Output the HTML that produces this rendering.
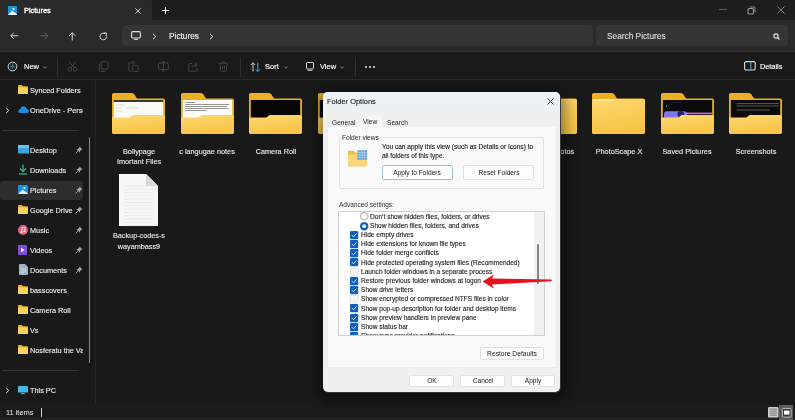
<!DOCTYPE html>
<html><head><meta charset="utf-8">
<style>
*{margin:0;padding:0;box-sizing:border-box}
html,body{width:795px;height:420px;overflow:hidden;background:#191919;font-family:"Liberation Sans",sans-serif;color:#fff;position:relative}
.a{position:absolute}
.t{position:absolute;white-space:nowrap;will-change:transform}
.k{-webkit-text-stroke:0.2px currentColor}
.k3{-webkit-text-stroke:0.3px currentColor}
.k2{-webkit-text-stroke:0.12px currentColor}
svg{position:absolute;overflow:visible}
</style></head><body>
<div class="a" style="left:0px;top:0px;width:795px;height:20px;background:#1d1d1d;"></div>
<div class="a" style="left:0px;top:0px;width:152px;height:20px;background:#2a2a2a;border-radius:0 2px 0 0"></div>
<div class="a" style="left:0px;top:20px;width:795px;height:32px;background:#2a2a2a;"></div>
<div class="a" style="left:0px;top:51px;width:795px;height:1px;background:#303030;"></div>
<div class="a" style="left:122px;top:25px;width:471px;height:21px;background:#353535;border-radius:4px"></div>
<div class="a" style="left:596px;top:25px;width:192px;height:21px;background:#353535;border-radius:4px"></div>
<div class="a" style="left:0px;top:52px;width:795px;height:27px;background:#1a1a1a;"></div>
<div class="a" style="left:0px;top:79px;width:795px;height:1.2px;background:#2b2b2b;"></div>
<div class="a" style="left:95px;top:80px;width:1px;height:324px;background:#262626;"></div>
<div class="a" style="left:0px;top:404px;width:795px;height:16px;background:#1b1b1b;"></div>
<div class="a" style="left:0px;top:417px;width:795px;height:3px;background:#1f2225;"></div>
<svg style="left:8px;top:6px" width="9" height="9" viewBox="0 0 9 9"><rect width="9" height="9" rx="0.5" fill="#1e90e0"/><path d="M0 9 L4.2 4.6 L9 8.2 V9Z" fill="#e6f4ff"/><circle cx="5.6" cy="3" r="1.1" fill="#e6f4ff"/></svg>
<div class="t k3" style="left:24px;top:5.70px;font-size:7.4px;color:#ffffff;line-height:10px;">Pictures</div>
<svg style="left:134.5px;top:7.5px" width="6" height="6" viewBox="0 0 6 6"><path d="M0.3 0.3 L5.7 5.7 M5.7 0.3 L0.3 5.7" stroke="#d8d8d8" stroke-width="0.9"/></svg>
<svg style="left:162px;top:7px" width="7" height="7" viewBox="0 0 7 7"><path d="M3.5 0 V7 M0 3.5 H7" stroke="#e8e8e8" stroke-width="1"/></svg>
<div class="a" style="left:718.5px;top:9px;width:8px;height:1px;background:#5a5a5a;"></div>
<svg style="left:746.5px;top:6px" width="9" height="9" viewBox="0 0 9 9"><rect x="1" y="2.5" width="5.5" height="5.5" rx="1" fill="none" stroke="#9a9a9a" stroke-width="1.1"/><path d="M2.8 1 H7 Q8 1 8 2 V6.2" fill="none" stroke="#9a9a9a" stroke-width="0.9"/></svg>
<svg style="left:777px;top:6px" width="8" height="8" viewBox="0 0 8 8"><path d="M0.5 0.5 L7.5 7.5 M7.5 0.5 L0.5 7.5" stroke="#8c8c8c" stroke-width="0.9"/></svg>
<svg style="left:9.7px;top:32px" width="8.5" height="7.5" viewBox="0 0 8.5 7.5"><path d="M8.3 3.75 H0.8 M3.8 0.6 L0.8 3.75 L3.8 6.9" fill="none" stroke="#dcdcdc" stroke-width="0.95"/></svg>
<svg style="left:39.7px;top:32px" width="8.5" height="7.5" viewBox="0 0 8.5 7.5"><path d="M0.2 3.75 H7.7 M4.7 0.6 L7.7 3.75 L4.7 6.9" fill="none" stroke="#666" stroke-width="0.95"/></svg>
<svg style="left:68.3px;top:31.5px" width="8.5" height="8.5" viewBox="0 0 8.5 8.5"><path d="M4.25 8.5 V0.8 M1 4 L4.25 0.8 L7.5 4" fill="none" stroke="#dcdcdc" stroke-width="0.95"/></svg>
<svg style="left:99px;top:31.5px" width="9" height="9" viewBox="0 0 9 9"><path d="M7.6 4.6 A3.3 3.3 0 1 1 6.3 1.9" fill="none" stroke="#dcdcdc" stroke-width="0.95"/><path d="M4.8 0.8 L7.5 1.1 L7.2 3.8" fill="none" stroke="#dcdcdc" stroke-width="0.95"/></svg>
<svg style="left:131px;top:31px" width="10" height="9" viewBox="0 0 10 9"><rect x="0.6" y="0.6" width="8.8" height="6.4" rx="1.2" fill="none" stroke="#dcdcdc" stroke-width="1.1"/><path d="M3 8.4 H7" stroke="#dcdcdc" stroke-width="1"/></svg>
<svg style="left:152px;top:33px" width="5" height="7" viewBox="0 0 5 7"><path d="M1 0.8 L3.8 3.5 L1 6.2" fill="none" stroke="#dcdcdc" stroke-width="1"/></svg>
<div class="t k2" style="left:168.5px;top:31.00px;font-size:8.3px;color:#f4f4f4;line-height:10px;">Pictures</div>
<svg style="left:209px;top:33px" width="5" height="7" viewBox="0 0 5 7"><path d="M1 0.8 L3.8 3.5 L1 6.2" fill="none" stroke="#dcdcdc" stroke-width="1"/></svg>
<div class="t k2" style="left:606.5px;top:31.00px;font-size:8.3px;color:#dcdcdc;line-height:10px;">Search Pictures</div>
<svg style="left:773px;top:32.5px" width="7" height="7" viewBox="0 0 7 7"><circle cx="3" cy="3" r="2.1" fill="none" stroke="#e6e6e6" stroke-width="1.1"/><path d="M4.5 4.5 L6.5 6.5" stroke="#e6e6e6" stroke-width="1.2"/></svg>
<svg style="left:7px;top:61px" width="11" height="11" viewBox="0 0 11 11"><circle cx="5.5" cy="5.5" r="4.4" fill="#1d2a30" stroke="#c8d6dc" stroke-width="1"/><path d="M5.5 3.2 V7.8 M3.2 5.5 H7.8" stroke="#4f7482" stroke-width="1"/></svg>
<div class="t k" style="left:23.5px;top:61.80px;font-size:7.5px;color:#f2f2f2;line-height:10px;">New</div>
<svg style="left:42.5px;top:65.5px" width="4" height="3" viewBox="0 0 4 3"><path d="M0.5 0.8 L2 2.2 L3.5 0.8" fill="none" stroke="#aaa" stroke-width="0.8"/></svg>
<div class="a" style="left:56.5px;top:57px;width:1px;height:20px;background:#2e2e2e;"></div>
<svg style="left:67px;top:61px" width="11" height="11" viewBox="0 0 11 11"><circle cx="2.8" cy="8.3" r="1.9" fill="none" stroke="#3e4749" stroke-width="1"/><circle cx="8.2" cy="8.3" r="1.9" fill="none" stroke="#3e4749" stroke-width="1"/><path d="M4 6.8 L8.8 0.5 M7 6.8 L2.2 0.5" stroke="#3e4749" stroke-width="1"/></svg>
<svg style="left:98px;top:61px" width="11" height="11" viewBox="0 0 11 11"><rect x="3.2" y="0.7" width="6.8" height="7.6" rx="1.5" fill="none" stroke="#3e4749" stroke-width="1"/><path d="M1.2 3 V8.6 Q1.2 10.3 2.9 10.3 H7.5" fill="none" stroke="#3e4749" stroke-width="1"/></svg>
<svg style="left:128px;top:61px" width="11" height="11" viewBox="0 0 11 11"><path d="M3 1.5 H1.8 Q0.8 1.5 0.8 2.5 V9.2 Q0.8 10.2 1.8 10.2 H4" fill="none" stroke="#414242" stroke-width="1"/><rect x="2.8" y="0.6" width="4" height="1.8" rx="0.6" fill="none" stroke="#414242" stroke-width="0.9"/><rect x="4.8" y="4.2" width="5.4" height="6.2" rx="1" fill="none" stroke="#34495a" stroke-width="1"/></svg>
<svg style="left:158px;top:61px" width="11" height="11" viewBox="0 0 11 11"><rect x="0.6" y="2" width="9.8" height="6.6" rx="1.3" fill="none" stroke="#3e4749" stroke-width="1"/><path d="M5.5 0.8 V10 M4.2 0.8 H6.8 M4.2 10 H6.8" stroke="#3e4749" stroke-width="0.9"/></svg>
<svg style="left:188px;top:61px" width="11" height="11" viewBox="0 0 11 11"><path d="M4 2.5 H2 Q0.8 2.5 0.8 3.7 V9 Q0.8 10.2 2 10.2 H8 Q9.2 10.2 9.2 9 V7.5" fill="none" stroke="#3e4749" stroke-width="1"/><path d="M4 7 Q4.5 3.8 8.5 3.8 M6.8 1.6 L9.2 3.8 L6.8 6" fill="none" stroke="#3e4749" stroke-width="1"/></svg>
<svg style="left:218px;top:61px" width="11" height="11" viewBox="0 0 11 11"><path d="M0.8 2.3 H10.2 M4 2.3 V1 H7 V2.3 M1.9 2.5 L2.6 9.3 Q2.8 10.3 3.8 10.3 H7.2 Q8.2 10.3 8.4 9.3 L9.1 2.5 M4.5 4.6 V8 M6.5 4.6 V8" fill="none" stroke="#414141" stroke-width="1"/></svg>
<div class="a" style="left:239.5px;top:57px;width:1px;height:20px;background:#2e2e2e;"></div>
<svg style="left:250px;top:61.5px" width="11" height="10" viewBox="0 0 11 10"><path d="M3 9.5 V0.8 M0.8 3 L3 0.8 L5.2 3" fill="none" stroke="#d0d0d0" stroke-width="1"/><path d="M7.8 0.8 V9.5 M5.6 7.3 L7.8 9.5 L10 7.3" fill="none" stroke="#4aa3df" stroke-width="1"/></svg>
<div class="t k" style="left:264.5px;top:61.80px;font-size:7.5px;color:#f2f2f2;line-height:10px;">Sort</div>
<svg style="left:283.5px;top:65.5px" width="4" height="3" viewBox="0 0 4 3"><path d="M0.5 0.8 L2 2.2 L3.5 0.8" fill="none" stroke="#aaa" stroke-width="0.8"/></svg>
<svg style="left:305.5px;top:62px" width="8" height="9" viewBox="0 0 8 9"><rect x="0.5" y="0.5" width="7" height="6.5" rx="1.1" fill="none" stroke="#d6d6d6" stroke-width="1"/><path d="M1.5 8.3 H6.5" stroke="#d6d6d6" stroke-width="0.9"/></svg>
<div class="t k" style="left:319.5px;top:61.80px;font-size:7.5px;color:#f2f2f2;line-height:10px;">View</div>
<svg style="left:339.5px;top:65.5px" width="4" height="3" viewBox="0 0 4 3"><path d="M0.5 0.8 L2 2.2 L3.5 0.8" fill="none" stroke="#aaa" stroke-width="0.8"/></svg>
<div class="a" style="left:354.5px;top:57px;width:1px;height:20px;background:#2e2e2e;"></div>
<div class="a" style="left:364.5px;top:65.5px;width:2.2px;height:2.2px;background:#e8e8e8;border-radius:1.1px"></div>
<div class="a" style="left:368.8px;top:65.5px;width:2.2px;height:2.2px;background:#e8e8e8;border-radius:1.1px"></div>
<div class="a" style="left:373.1px;top:65.5px;width:2.2px;height:2.2px;background:#e8e8e8;border-radius:1.1px"></div>
<svg style="left:744px;top:61px" width="12" height="10" viewBox="0 0 12 10"><rect x="0.6" y="0.6" width="10.6" height="8.4" rx="1.5" fill="none" stroke="#d0dde4" stroke-width="1.1"/><path d="M6.8 0.6 V9" stroke="#5aa9d6" stroke-width="1.1"/></svg>
<div class="t k" style="left:760px;top:61.80px;font-size:7.3px;color:#f2f2f2;line-height:10px;">Details</div>
<div class="a" style="left:0px;top:180.5px;width:83px;height:19.5px;background:#2d2d2d;border-radius:3px"></div>
<div class="a" style="left:88.5px;top:137px;width:1.3px;height:226px;background:#8b8b8b;border-radius:1px"></div>
<div class="a" style="left:2px;top:130px;width:77px;height:1px;background:#333;"></div>
<div class="a" style="left:2px;top:370px;width:77px;height:1px;background:#333;"></div>
<svg style="left:18px;top:85px" width="10" height="9" viewBox="0 0 10 9"><path d="M0 1 Q0 0 1 0 H3.8 L5 1.3 H9 Q10 1.3 10 2.3 V8 Q10 9 9 9 H1 Q0 9 0 8Z" fill="#e8b030"/><rect x="0" y="2.4" width="10" height="6.6" rx="0.8" fill="#fcd15c"/></svg>
<div class="a" style="left:30px;top:85.8px;width:53px;height:11px;overflow:hidden"><div class="t k2" style="left:0;top:0;font-size:7.3px;line-height:10px;color:#ececec">Synced Folders</div></div>
<svg style="left:18px;top:105px" width="11" height="9" viewBox="0 0 11 9"><path d="M2.5 8 Q0 8 0.3 5.8 Q0.6 4.2 2.3 4.2 Q2.8 1.2 5.8 1.2 Q8.2 1.4 8.6 3.8 Q10.8 4 10.8 6 Q10.6 8 8.8 8Z" fill="#1f8ee6"/></svg>
<div class="a" style="left:30px;top:105.8px;width:53px;height:11px;overflow:hidden"><div class="t k2" style="left:0;top:0;font-size:7.3px;line-height:10px;color:#ececec">OneDrive - Personal</div></div>
<svg style="left:5px;top:106.5px" width="5" height="7" viewBox="0 0 5 7"><path d="M1 0.8 L3.8 3.5 L1 6.2" fill="none" stroke="#d8d8d8" stroke-width="1"/></svg>
<svg style="left:18px;top:145px" width="11" height="9" viewBox="0 0 11 9"><rect x="0" y="0" width="11" height="8.5" rx="0.8" fill="#3aa6e0"/><rect x="0" y="0" width="11" height="3" fill="#66c3ef"/></svg>
<div class="a" style="left:30px;top:145.8px;width:53px;height:11px;overflow:hidden"><div class="t k2" style="left:0;top:0;font-size:7.3px;line-height:10px;color:#ececec">Desktop</div></div>
<svg style="left:74.5px;top:146px" width="8" height="8" viewBox="0 0 8 8"><path d="M0.6 7.4 L3 5" stroke="#a8a8a8" stroke-width="0.9"/><path d="M4.6 0.6 L7.4 3.4 L6.2 3.8 L4.8 5.6 L5 6.8 L1.2 3 L2.4 3.2 L4.2 1.8Z" fill="#a8a8a8"/></svg>
<svg style="left:18px;top:164px" width="10" height="11" viewBox="0 0 10 11"><path d="M5 0.5 V7.3 M2 4.5 L5 7.5 L8 4.5" fill="none" stroke="#2ebf9e" stroke-width="1.2"/><path d="M0.8 10 H9.2" stroke="#2ebf9e" stroke-width="1.2"/></svg>
<div class="a" style="left:30px;top:165.8px;width:53px;height:11px;overflow:hidden"><div class="t k2" style="left:0;top:0;font-size:7.3px;line-height:10px;color:#ececec">Downloads</div></div>
<svg style="left:74.5px;top:166px" width="8" height="8" viewBox="0 0 8 8"><path d="M0.6 7.4 L3 5" stroke="#a8a8a8" stroke-width="0.9"/><path d="M4.6 0.6 L7.4 3.4 L6.2 3.8 L4.8 5.6 L5 6.8 L1.2 3 L2.4 3.2 L4.2 1.8Z" fill="#a8a8a8"/></svg>
<svg style="left:18px;top:185px" width="10" height="9" viewBox="0 0 10 9"><rect width="10" height="9" rx="0.6" fill="#1e90e0"/><path d="M0 9 L4.5 4.8 L10 8.6 V9Z" fill="#e6f4ff"/><circle cx="6.4" cy="3" r="1.1" fill="#e6f4ff"/></svg>
<div class="a" style="left:30px;top:185.8px;width:53px;height:11px;overflow:hidden"><div class="t k2" style="left:0;top:0;font-size:7.3px;line-height:10px;color:#ececec">Pictures</div></div>
<svg style="left:74.5px;top:186px" width="8" height="8" viewBox="0 0 8 8"><path d="M0.6 7.4 L3 5" stroke="#a8a8a8" stroke-width="0.9"/><path d="M4.6 0.6 L7.4 3.4 L6.2 3.8 L4.8 5.6 L5 6.8 L1.2 3 L2.4 3.2 L4.2 1.8Z" fill="#a8a8a8"/></svg>
<svg style="left:18px;top:205px" width="10" height="9" viewBox="0 0 10 9"><path d="M0 1 Q0 0 1 0 H3.8 L5 1.3 H9 Q10 1.3 10 2.3 V8 Q10 9 9 9 H1 Q0 9 0 8Z" fill="#e8b030"/><rect x="0" y="2.4" width="10" height="6.6" rx="0.8" fill="#fcd15c"/></svg>
<div class="a" style="left:30px;top:205.8px;width:53px;height:11px;overflow:hidden"><div class="t k2" style="left:0;top:0;font-size:7.3px;line-height:10px;color:#ececec">Google Drive</div></div>
<svg style="left:74.5px;top:206px" width="8" height="8" viewBox="0 0 8 8"><path d="M0.6 7.4 L3 5" stroke="#a8a8a8" stroke-width="0.9"/><path d="M4.6 0.6 L7.4 3.4 L6.2 3.8 L4.8 5.6 L5 6.8 L1.2 3 L2.4 3.2 L4.2 1.8Z" fill="#a8a8a8"/></svg>
<svg style="left:18px;top:224.5px" width="10" height="10" viewBox="0 0 10 10"><circle cx="5" cy="5" r="5" fill="#e0607a"/><path d="M4 7.2 V2.6 L7 2 V6.4" fill="none" stroke="#fde" stroke-width="0.9"/><circle cx="3.3" cy="7.2" r="1" fill="#fde"/><circle cx="6.3" cy="6.5" r="1" fill="#fde"/></svg>
<div class="a" style="left:30px;top:225.8px;width:53px;height:11px;overflow:hidden"><div class="t k2" style="left:0;top:0;font-size:7.3px;line-height:10px;color:#ececec">Music</div></div>
<svg style="left:74.5px;top:226px" width="8" height="8" viewBox="0 0 8 8"><path d="M0.6 7.4 L3 5" stroke="#a8a8a8" stroke-width="0.9"/><path d="M4.6 0.6 L7.4 3.4 L6.2 3.8 L4.8 5.6 L5 6.8 L1.2 3 L2.4 3.2 L4.2 1.8Z" fill="#a8a8a8"/></svg>
<svg style="left:18px;top:244.5px" width="9" height="10" viewBox="0 0 9 10"><rect width="9" height="10" rx="1" fill="#7b4fd8"/><path d="M3 2.8 L6.8 5 L3 7.2Z" fill="#f3ecff"/></svg>
<div class="a" style="left:30px;top:245.8px;width:53px;height:11px;overflow:hidden"><div class="t k2" style="left:0;top:0;font-size:7.3px;line-height:10px;color:#ececec">Videos</div></div>
<svg style="left:74.5px;top:246px" width="8" height="8" viewBox="0 0 8 8"><path d="M0.6 7.4 L3 5" stroke="#a8a8a8" stroke-width="0.9"/><path d="M4.6 0.6 L7.4 3.4 L6.2 3.8 L4.8 5.6 L5 6.8 L1.2 3 L2.4 3.2 L4.2 1.8Z" fill="#a8a8a8"/></svg>
<svg style="left:18.5px;top:264px" width="9" height="11" viewBox="0 0 9 11"><path d="M0 1 Q0 0 1 0 H6 L9 3 V10 Q9 11 8 11 H1 Q0 11 0 10Z" fill="#9fb4c8"/><path d="M2 5 H7 M2 7 H7 M2 9 H5" stroke="#dfe8f0" stroke-width="0.7"/></svg>
<div class="a" style="left:30px;top:265.8px;width:53px;height:11px;overflow:hidden"><div class="t k2" style="left:0;top:0;font-size:7.3px;line-height:10px;color:#ececec">Documents</div></div>
<svg style="left:74.5px;top:266px" width="8" height="8" viewBox="0 0 8 8"><path d="M0.6 7.4 L3 5" stroke="#a8a8a8" stroke-width="0.9"/><path d="M4.6 0.6 L7.4 3.4 L6.2 3.8 L4.8 5.6 L5 6.8 L1.2 3 L2.4 3.2 L4.2 1.8Z" fill="#a8a8a8"/></svg>
<svg style="left:18px;top:285px" width="10" height="9" viewBox="0 0 10 9"><path d="M0 1 Q0 0 1 0 H3.8 L5 1.3 H9 Q10 1.3 10 2.3 V8 Q10 9 9 9 H1 Q0 9 0 8Z" fill="#e8b030"/><rect x="0" y="2.4" width="10" height="6.6" rx="0.8" fill="#fcd15c"/></svg>
<div class="a" style="left:30px;top:285.8px;width:53px;height:11px;overflow:hidden"><div class="t k2" style="left:0;top:0;font-size:7.3px;line-height:10px;color:#ececec">basscovers</div></div>
<svg style="left:18px;top:305px" width="10" height="9" viewBox="0 0 10 9"><path d="M0 1 Q0 0 1 0 H3.8 L5 1.3 H9 Q10 1.3 10 2.3 V8 Q10 9 9 9 H1 Q0 9 0 8Z" fill="#e8b030"/><rect x="0" y="2.4" width="10" height="6.6" rx="0.8" fill="#fcd15c"/></svg>
<div class="a" style="left:30px;top:305.8px;width:53px;height:11px;overflow:hidden"><div class="t k2" style="left:0;top:0;font-size:7.3px;line-height:10px;color:#ececec">Camera Roll</div></div>
<svg style="left:18px;top:325px" width="10" height="9" viewBox="0 0 10 9"><path d="M0 1 Q0 0 1 0 H3.8 L5 1.3 H9 Q10 1.3 10 2.3 V8 Q10 9 9 9 H1 Q0 9 0 8Z" fill="#e8b030"/><rect x="0" y="2.4" width="10" height="6.6" rx="0.8" fill="#fcd15c"/></svg>
<div class="a" style="left:30px;top:325.8px;width:53px;height:11px;overflow:hidden"><div class="t k2" style="left:0;top:0;font-size:7.3px;line-height:10px;color:#ececec">Vs</div></div>
<svg style="left:18px;top:345px" width="10" height="9" viewBox="0 0 10 9"><path d="M0 1 Q0 0 1 0 H3.8 L5 1.3 H9 Q10 1.3 10 2.3 V8 Q10 9 9 9 H1 Q0 9 0 8Z" fill="#e8b030"/><rect x="0" y="2.4" width="10" height="6.6" rx="0.8" fill="#fcd15c"/></svg>
<div class="a" style="left:30px;top:345.8px;width:53px;height:11px;overflow:hidden"><div class="t k2" style="left:0;top:0;font-size:7.3px;line-height:10px;color:#ececec">Nosferatu the Vampire</div></div>
<svg style="left:18px;top:385.5px" width="10" height="8.5" viewBox="0 0 10 8.5"><rect x="0" y="0" width="10" height="6.5" rx="0.6" fill="#45b8ea"/><rect x="3.2" y="7" width="3.6" height="1.2" fill="#6aa8d0"/></svg>
<div class="a" style="left:30px;top:385.8px;width:53px;height:11px;overflow:hidden"><div class="t k2" style="left:0;top:0;font-size:7.3px;line-height:10px;color:#ececec">This PC</div></div>
<svg style="left:5px;top:386.5px" width="5" height="7" viewBox="0 0 5 7"><path d="M1 0.8 L3.8 3.5 L1 6.2" fill="none" stroke="#d8d8d8" stroke-width="1"/></svg>
<div class="t k2" style="left:6px;top:407.80px;font-size:7.4px;color:#d8d8d8;line-height:10px;">11 items</div>
<div class="a" style="left:40.5px;top:408px;width:1px;height:9px;background:#cfcfcf;"></div>
<svg style="left:767.5px;top:406.5px" width="10.5" height="10.5" viewBox="0 0 10.5 10.5"><rect x="0" y="0" width="10.5" height="10.5" rx="1.2" fill="#cfcfcf"/><path d="M1.5 2.2 H9 M1.5 4.2 H9 M1.5 6.2 H9 M1.5 8.2 H9" stroke="#3a3a3a" stroke-width="0.6"/></svg>
<div class="a" style="left:779.4px;top:404.5px;width:13.8px;height:15.5px;background:#5a5a5a;"></div>
<svg style="left:782px;top:407.5px" width="9.5" height="9.5" viewBox="0 0 9.5 9.5"><rect x="0.4" y="0.4" width="8.7" height="8.7" rx="1" fill="#3a3a3a" stroke="#d8d8d8" stroke-width="0.8"/><rect x="2" y="2.6" width="5.5" height="4" fill="#fafafa"/></svg>
<svg style="left:112.0px;top:93px" width="53" height="41" viewBox="0 0 53 41"><defs><linearGradient id="g112" x1="0" y1="0" x2="0.3" y2="1"><stop offset="0" stop-color="#fdd872"/><stop offset="1" stop-color="#f7c445"/></linearGradient></defs><path d="M2 0 H19.5 C21 0 21.8 0.8 22.6 1.8 L25 5.5 H51 C52.2 5.5 53 6.3 53 7.5 V39 C53 40.2 52.2 41 51 41 H2 C0.8 41 0 40.2 0 39 V2 C0 0.8 0.8 0 2 0Z" fill="#eeae24"/><rect x="1.8" y="7" width="49.4" height="18" fill="#fbfbf6"/><rect x="1.8" y="7" width="49.4" height="2" fill="#3a3a2a"/><path d="M4 12 H12 M4 15 H9 M14 15 H26 M4 18 H10" stroke="#c9c3a6" stroke-width="0.6"/><path d="M0 24.5 H17 C18.2 24.5 18.6 23.6 19.4 22.8 C20.2 22.1 20.8 22 22 22 H51 C52.2 22 53 22.8 53 24 V39 C53 40.2 52.2 41 51 41 H2 C0.8 41 0 40.2 0 39Z" fill="url(#g112)"/></svg>
<div class="t k2" style="left:104.5px;top:146.60px;font-size:7.3px;color:#e8e8e8;line-height:10px;width:68px;text-align:center;">Bollypage</div>
<div class="t k2" style="left:104.5px;top:156.90px;font-size:7.3px;color:#e8e8e8;line-height:10px;width:68px;text-align:center;">Imortant Files</div>
<svg style="left:180.6px;top:93px" width="53" height="41" viewBox="0 0 53 41"><defs><linearGradient id="g180" x1="0" y1="0" x2="0.3" y2="1"><stop offset="0" stop-color="#fdd872"/><stop offset="1" stop-color="#f7c445"/></linearGradient></defs><path d="M2 0 H19.5 C21 0 21.8 0.8 22.6 1.8 L25 5.5 H51 C52.2 5.5 53 6.3 53 7.5 V39 C53 40.2 52.2 41 51 41 H2 C0.8 41 0 40.2 0 39 V2 C0 0.8 0.8 0 2 0Z" fill="#eeae24"/><rect x="1.8" y="7" width="49.4" height="18" fill="#fbfbf8"/><path d="M4 9.5 H14 M4 11.5 H48 M4 13.5 H46 M4 15.5 H47 M4 17.5 H26" stroke="#6b6b6b" stroke-width="0.7"/><path d="M0 24.5 H17 C18.2 24.5 18.6 23.6 19.4 22.8 C20.2 22.1 20.8 22 22 22 H51 C52.2 22 53 22.8 53 24 V39 C53 40.2 52.2 41 51 41 H2 C0.8 41 0 40.2 0 39Z" fill="url(#g180)"/></svg>
<div class="t k2" style="left:173.1px;top:146.60px;font-size:7.3px;color:#e8e8e8;line-height:10px;width:68px;text-align:center;">c langugae notes</div>
<svg style="left:249.2px;top:93px" width="53" height="41" viewBox="0 0 53 41"><defs><linearGradient id="g249" x1="0" y1="0" x2="0.3" y2="1"><stop offset="0" stop-color="#fdd872"/><stop offset="1" stop-color="#f7c445"/></linearGradient></defs><path d="M2 0 H19.5 C21 0 21.8 0.8 22.6 1.8 L25 5.5 H51 C52.2 5.5 53 6.3 53 7.5 V39 C53 40.2 52.2 41 51 41 H2 C0.8 41 0 40.2 0 39 V2 C0 0.8 0.8 0 2 0Z" fill="#eeae24"/><rect x="1.8" y="7" width="49.4" height="18" fill="#050505"/><path d="M0 24.5 H17 C18.2 24.5 18.6 23.6 19.4 22.8 C20.2 22.1 20.8 22 22 22 H51 C52.2 22 53 22.8 53 24 V39 C53 40.2 52.2 41 51 41 H2 C0.8 41 0 40.2 0 39Z" fill="url(#g249)"/></svg>
<div class="t k2" style="left:241.7px;top:146.60px;font-size:7.3px;color:#e8e8e8;line-height:10px;width:68px;text-align:center;">Camera Roll</div>
<svg style="left:317.8px;top:93px" width="53" height="41" viewBox="0 0 53 41"><defs><linearGradient id="g317" x1="0" y1="0" x2="0.3" y2="1"><stop offset="0" stop-color="#fdd872"/><stop offset="1" stop-color="#f7c445"/></linearGradient></defs><path d="M2 0 H19.5 C21 0 21.8 0.8 22.6 1.8 L25 5.5 H51 C52.2 5.5 53 6.3 53 7.5 V39 C53 40.2 52.2 41 51 41 H2 C0.8 41 0 40.2 0 39 V2 C0 0.8 0.8 0 2 0Z" fill="#eeae24"/><rect x="1.8" y="7" width="49.4" height="18" fill="#050505"/><path d="M0 24.5 H17 C18.2 24.5 18.6 23.6 19.4 22.8 C20.2 22.1 20.8 22 22 22 H51 C52.2 22 53 22.8 53 24 V39 C53 40.2 52.2 41 51 41 H2 C0.8 41 0 40.2 0 39Z" fill="url(#g317)"/></svg>
<svg style="left:386.4px;top:93px" width="53" height="41" viewBox="0 0 53 41"><defs><linearGradient id="g386" x1="0" y1="0" x2="0.3" y2="1"><stop offset="0" stop-color="#fdd872"/><stop offset="1" stop-color="#f7c445"/></linearGradient></defs><path d="M2 0 H19.5 C21 0 21.8 0.8 22.6 1.8 L25 5.5 H51 C52.2 5.5 53 6.3 53 7.5 V39 C53 40.2 52.2 41 51 41 H2 C0.8 41 0 40.2 0 39 V2 C0 0.8 0.8 0 2 0Z" fill="#eeae24"/><rect x="0" y="6" width="53" height="35" rx="2" fill="url(#g386)"/><rect x="1.5" y="6.4" width="20" height="1.3" fill="#fff2c8" opacity="0.8"/></svg>
<svg style="left:455.0px;top:93px" width="53" height="41" viewBox="0 0 53 41"><defs><linearGradient id="g455" x1="0" y1="0" x2="0.3" y2="1"><stop offset="0" stop-color="#fdd872"/><stop offset="1" stop-color="#f7c445"/></linearGradient></defs><path d="M2 0 H19.5 C21 0 21.8 0.8 22.6 1.8 L25 5.5 H51 C52.2 5.5 53 6.3 53 7.5 V39 C53 40.2 52.2 41 51 41 H2 C0.8 41 0 40.2 0 39 V2 C0 0.8 0.8 0 2 0Z" fill="#eeae24"/><rect x="0" y="6" width="53" height="35" rx="2" fill="url(#g455)"/><rect x="1.5" y="6.4" width="20" height="1.3" fill="#fff2c8" opacity="0.8"/></svg>
<svg style="left:523.6px;top:93px" width="53" height="41" viewBox="0 0 53 41"><defs><linearGradient id="g523" x1="0" y1="0" x2="0.3" y2="1"><stop offset="0" stop-color="#fdd872"/><stop offset="1" stop-color="#f7c445"/></linearGradient></defs><path d="M2 0 H19.5 C21 0 21.8 0.8 22.6 1.8 L25 5.5 H51 C52.2 5.5 53 6.3 53 7.5 V39 C53 40.2 52.2 41 51 41 H2 C0.8 41 0 40.2 0 39 V2 C0 0.8 0.8 0 2 0Z" fill="#eeae24"/><rect x="0" y="6" width="53" height="35" rx="2" fill="url(#g523)"/></svg>
<div class="t k2" style="left:516.0999999999999px;top:146.60px;font-size:7.3px;color:#e8e8e8;line-height:10px;width:68px;text-align:center;">Google Photos</div>
<svg style="left:592.2px;top:93px" width="53" height="41" viewBox="0 0 53 41"><defs><linearGradient id="g592" x1="0" y1="0" x2="0.3" y2="1"><stop offset="0" stop-color="#fdd872"/><stop offset="1" stop-color="#f7c445"/></linearGradient></defs><path d="M2 0 H19.5 C21 0 21.8 0.8 22.6 1.8 L25 5.5 H51 C52.2 5.5 53 6.3 53 7.5 V39 C53 40.2 52.2 41 51 41 H2 C0.8 41 0 40.2 0 39 V2 C0 0.8 0.8 0 2 0Z" fill="#eeae24"/><rect x="0" y="6" width="53" height="35" rx="2" fill="url(#g592)"/><rect x="1.5" y="6.4" width="20" height="1.3" fill="#fff2c8" opacity="0.8"/></svg>
<div class="t k2" style="left:584.6999999999999px;top:146.60px;font-size:7.3px;color:#e8e8e8;line-height:10px;width:68px;text-align:center;">PhotoScape X</div>
<svg style="left:660.8px;top:93px" width="53" height="41" viewBox="0 0 53 41"><defs><linearGradient id="g660" x1="0" y1="0" x2="0.3" y2="1"><stop offset="0" stop-color="#fdd872"/><stop offset="1" stop-color="#f7c445"/></linearGradient></defs><path d="M2 0 H19.5 C21 0 21.8 0.8 22.6 1.8 L25 5.5 H51 C52.2 5.5 53 6.3 53 7.5 V39 C53 40.2 52.2 41 51 41 H2 C0.8 41 0 40.2 0 39 V2 C0 0.8 0.8 0 2 0Z" fill="#eeae24"/><rect x="1.8" y="7" width="49.4" height="18" fill="#0b0b0f"/><path d="M3 25 V20.5 Q3 18.3 5.5 18.3 H23 Q26 18.3 26 21 V25Z" fill="#7f78ee"/><rect x="24" y="19.6" width="27" height="1.6" fill="#d868d8"/><circle cx="19.8" cy="21.3" r="3.3" fill="#22226a"/><path d="M5.5 12 V14" stroke="#4aa0a0" stroke-width="0.8"/><path d="M10 9.5 H20" stroke="#333a44" stroke-width="0.5"/><path d="M0 24.5 H17 C18.2 24.5 18.6 23.6 19.4 22.8 C20.2 22.1 20.8 22 22 22 H51 C52.2 22 53 22.8 53 24 V39 C53 40.2 52.2 41 51 41 H2 C0.8 41 0 40.2 0 39Z" fill="url(#g660)"/></svg>
<div class="t k2" style="left:653.3px;top:146.60px;font-size:7.3px;color:#e8e8e8;line-height:10px;width:68px;text-align:center;">Saved Pictures</div>
<svg style="left:729.4px;top:93px" width="53" height="41" viewBox="0 0 53 41"><defs><linearGradient id="g729" x1="0" y1="0" x2="0.3" y2="1"><stop offset="0" stop-color="#fdd872"/><stop offset="1" stop-color="#f7c445"/></linearGradient></defs><path d="M2 0 H19.5 C21 0 21.8 0.8 22.6 1.8 L25 5.5 H51 C52.2 5.5 53 6.3 53 7.5 V39 C53 40.2 52.2 41 51 41 H2 C0.8 41 0 40.2 0 39 V2 C0 0.8 0.8 0 2 0Z" fill="#eeae24"/><rect x="1.8" y="7" width="49.4" height="18" fill="#0b0b0b"/><path d="M7.5 10.6 H50 M7.5 13 H50 M7.5 17 H41" stroke="#9a9a9a" stroke-width="0.55"/><path d="M0 24.5 H17 C18.2 24.5 18.6 23.6 19.4 22.8 C20.2 22.1 20.8 22 22 22 H51 C52.2 22 53 22.8 53 24 V39 C53 40.2 52.2 41 51 41 H2 C0.8 41 0 40.2 0 39Z" fill="url(#g729)"/></svg>
<div class="t k2" style="left:721.9px;top:146.60px;font-size:7.3px;color:#e8e8e8;line-height:10px;width:68px;text-align:center;">Screenshots</div>
<svg style="left:119px;top:174px" width="39" height="52" viewBox="0 0 39 52"><path d="M0 0 H27 L39 12 V52 H0Z" fill="#f7f7f7"/><path d="M27 0 V12 H39Z" fill="#d9d9d9"/><path d="M27 0 L39 12" stroke="#c8c8c8" stroke-width="0.5"/><path d="M5 12.0 H34" stroke="#e0e0e0" stroke-width="0.6"/><path d="M5 15.3 H34" stroke="#e0e0e0" stroke-width="0.6"/><path d="M5 18.6 H34" stroke="#e0e0e0" stroke-width="0.6"/><path d="M5 21.9 H34" stroke="#e0e0e0" stroke-width="0.6"/><path d="M5 25.2 H34" stroke="#e0e0e0" stroke-width="0.6"/><path d="M5 28.5 H34" stroke="#e0e0e0" stroke-width="0.6"/><path d="M5 31.8 H34" stroke="#e0e0e0" stroke-width="0.6"/><path d="M5 35.1 H34" stroke="#e0e0e0" stroke-width="0.6"/><path d="M5 38.4 H34" stroke="#e0e0e0" stroke-width="0.6"/><path d="M5 41.7 H34" stroke="#e0e0e0" stroke-width="0.6"/><path d="M5 45.0 H34" stroke="#e0e0e0" stroke-width="0.6"/><path d="M5 48.3 H34" stroke="#e0e0e0" stroke-width="0.6"/><path d="M5 51.6 H34" stroke="#e0e0e0" stroke-width="0.6"/></svg>
<div class="t k2" style="left:103.5px;top:231.30px;font-size:7.25px;color:#e8e8e8;line-height:10px;width:70px;text-align:center;">Backup-codes-s</div>
<div class="t k2" style="left:103.5px;top:241.70px;font-size:7.25px;color:#e8e8e8;line-height:10px;width:70px;text-align:center;">wayambass9</div>
<div class="a" style="left:322.5px;top:91.5px;width:238px;height:301.5px;background:#3a3a3a;border-radius:6px;box-shadow:0 3px 14px 4px rgba(0,0,0,0.45)"></div>
<div class="a" style="left:323px;top:92px;width:237px;height:300px;background:#f0f0f0;border-radius:5px;overflow:hidden"></div>
<div class="a" style="left:323px;top:92px;width:237px;height:35px;background:linear-gradient(#edf3f8 0px,#edf2f6 12px,#efefef 22px,#efefef 35px);border-radius:5px 5px 0 0"></div>
<div class="t k2" style="left:327.2px;top:96.50px;font-size:7.45px;color:#262626;line-height:10px;">Folder Options</div>
<svg style="left:546.5px;top:98px" width="7" height="7" viewBox="0 0 7 7"><path d="M0.5 0.5 L6.5 6.5 M6.5 0.5 L0.5 6.5" stroke="#333" stroke-width="0.9"/></svg>
<div class="a" style="left:326.7px;top:126.8px;width:230px;height:241.5px;background:#f9f9f9;border:1px solid #ededed;border-top:none"></div>
<div class="a" style="left:359.5px;top:114.8px;width:22.5px;height:13px;background:linear-gradient(#f2f4f5,#f8f8f8);border-radius:2px 2px 0 0"></div>
<div class="t " style="left:331.5px;top:117.80px;font-size:6.6px;color:#2a2a2a;line-height:10px;">General</div>
<div class="t " style="left:362.6px;top:116.50px;font-size:6.6px;color:#1e1e1e;line-height:10px;">View</div>
<div class="t " style="left:387.4px;top:117.80px;font-size:6.6px;color:#2a2a2a;line-height:10px;">Search</div>
<div class="a" style="left:338.7px;top:137.2px;width:205.6px;height:52.1px;background:transparent;border:1px solid #e2e2e2;border-radius:2px"></div>
<div class="a" style="left:341px;top:132px;width:39px;height:10px;background:#f9f9f9;"></div>
<div class="t " style="left:342.3px;top:133.20px;font-size:6.55px;color:#2a2a2a;line-height:10px;">Folder views</div>
<svg style="left:348px;top:149.5px" width="20" height="17" viewBox="0 0 20 17"><path d="M1 0.8 H5.5 L7 2.4 H17 Q19 2.4 19 4 V15.2 Q19 16.2 18 16.2 H1 Q0 16.2 0 15.2 V1.8 Q0 0.8 1 0.8Z" fill="#f0bd45"/><rect x="0" y="4.6" width="19" height="11.6" rx="0.8" fill="#fbd779"/><rect x="9.5" y="0.2" width="9.5" height="9.6" fill="#5b9ee0"/><path d="M11.9 0.2 V9.8 M14.2 0.2 V9.8 M16.6 0.2 V9.8 M9.5 2.6 H19 M9.5 5 H19 M9.5 7.4 H19" stroke="#d8e9f8" stroke-width="0.5"/></svg>
<div class="t k2" style="left:381.5px;top:141.60px;font-size:6.57px;color:#1c1c1c;line-height:10px;">You can apply this view (such as Details or Icons) to</div>
<div class="t k2" style="left:381.5px;top:150.50px;font-size:6.45px;color:#1c1c1c;line-height:10px;">all folders of this type.</div>
<div class="a" style="left:381.5px;top:165.1px;width:71.1px;height:14.7px;background:#fdfdfd;border:1px solid #a3c2d8;border-radius:2px"></div>
<div class="t " style="left:381.0px;top:167.60px;font-size:6.6px;color:#1c1c1c;line-height:10px;width:72px;text-align:center;">Apply to Folders</div>
<div class="a" style="left:463px;top:165.1px;width:71.2px;height:14.7px;background:#fdfdfd;border:1px solid #e0e0e0;border-radius:2px"></div>
<div class="t " style="left:462.6px;top:167.60px;font-size:6.6px;color:#1c1c1c;line-height:10px;width:72px;text-align:center;">Reset Folders</div>
<div class="t " style="left:338.6px;top:200.00px;font-size:6.5px;color:#333;line-height:10px;">Advanced settings:</div>
<div class="a" style="left:338.3px;top:211px;width:206.4px;height:124.8px;background:#fff;border:1px solid #d0d0d0;overflow:hidden">
<svg style="left:20.30px;top:0.30px" width="8.4" height="8.4" viewBox="0 0 8.4 8.4"><circle cx="4.2" cy="4.2" r="3.8" fill="#fafafa" stroke="#8a8a8a" stroke-width="0.7"/></svg>
<div class="t k2" style="left:30.7px;top:-0.50px;font-size:6.57px;color:#1c1c1c;line-height:10px;">Don’t show hidden files, folders, or drives</div>
<svg style="left:20.30px;top:9.50px" width="8.4" height="8.4" viewBox="0 0 8.4 8.4"><circle cx="4.2" cy="4.2" r="4.2" fill="#0f5fb8"/><circle cx="4.2" cy="4.2" r="1.9" fill="#fff"/></svg>
<div class="t k2" style="left:30.7px;top:8.70px;font-size:6.57px;color:#1c1c1c;line-height:10px;">Show hidden files, folders, and drives</div>
<svg style="left:10.70px;top:18.80px" width="8.2" height="8.2" viewBox="0 0 8.2 8.2"><rect width="8.2" height="8.2" rx="1.2" fill="#1060c0"/><path d="M1.9 4.2 L3.5 5.8 L6.4 2.6" fill="none" stroke="#fff" stroke-width="0.8"/></svg>
<div class="t k2" style="left:21.4px;top:17.90px;font-size:6.57px;color:#1c1c1c;line-height:10px;">Hide empty drives</div>
<svg style="left:10.70px;top:28.00px" width="8.2" height="8.2" viewBox="0 0 8.2 8.2"><rect width="8.2" height="8.2" rx="1.2" fill="#1060c0"/><path d="M1.9 4.2 L3.5 5.8 L6.4 2.6" fill="none" stroke="#fff" stroke-width="0.8"/></svg>
<div class="t k2" style="left:21.4px;top:27.10px;font-size:6.57px;color:#1c1c1c;line-height:10px;">Hide extensions for known file types</div>
<svg style="left:10.70px;top:37.20px" width="8.2" height="8.2" viewBox="0 0 8.2 8.2"><rect width="8.2" height="8.2" rx="1.2" fill="#1060c0"/><path d="M1.9 4.2 L3.5 5.8 L6.4 2.6" fill="none" stroke="#fff" stroke-width="0.8"/></svg>
<div class="t k2" style="left:21.4px;top:36.30px;font-size:6.57px;color:#1c1c1c;line-height:10px;">Hide folder merge conflicts</div>
<svg style="left:10.70px;top:46.40px" width="8.2" height="8.2" viewBox="0 0 8.2 8.2"><rect width="8.2" height="8.2" rx="1.2" fill="#1060c0"/><path d="M1.9 4.2 L3.5 5.8 L6.4 2.6" fill="none" stroke="#fff" stroke-width="0.8"/></svg>
<div class="t k2" style="left:21.4px;top:45.50px;font-size:6.57px;color:#1c1c1c;line-height:10px;">Hide protected operating system files (Recommended)</div>
<svg style="left:10.70px;top:55.60px" width="8.2" height="8.2" viewBox="0 0 8.2 8.2"><rect x="0.35" y="0.35" width="7.5" height="7.5" rx="1.2" fill="#f6f6f6" stroke="#d4d4d4" stroke-width="0.7"/></svg>
<div class="t k2" style="left:21.4px;top:54.70px;font-size:6.57px;color:#1c1c1c;line-height:10px;">Launch folder windows in a separate process</div>
<svg style="left:10.70px;top:64.80px" width="8.2" height="8.2" viewBox="0 0 8.2 8.2"><rect width="8.2" height="8.2" rx="1.2" fill="#1060c0"/><path d="M1.9 4.2 L3.5 5.8 L6.4 2.6" fill="none" stroke="#fff" stroke-width="0.8"/></svg>
<div class="t k2" style="left:21.4px;top:63.90px;font-size:6.57px;color:#1c1c1c;line-height:10px;">Restore previous folder windows at logon</div>
<svg style="left:10.70px;top:74.00px" width="8.2" height="8.2" viewBox="0 0 8.2 8.2"><rect width="8.2" height="8.2" rx="1.2" fill="#1060c0"/><path d="M1.9 4.2 L3.5 5.8 L6.4 2.6" fill="none" stroke="#fff" stroke-width="0.8"/></svg>
<div class="t k2" style="left:21.4px;top:73.10px;font-size:6.57px;color:#1c1c1c;line-height:10px;">Show drive letters</div>
<svg style="left:10.70px;top:83.20px" width="8.2" height="8.2" viewBox="0 0 8.2 8.2"><rect x="0.35" y="0.35" width="7.5" height="7.5" rx="1.2" fill="#f6f6f6" stroke="#d4d4d4" stroke-width="0.7"/></svg>
<div class="t k2" style="left:21.4px;top:82.30px;font-size:6.57px;color:#1c1c1c;line-height:10px;">Show encrypted or compressed NTFS files in color</div>
<svg style="left:10.70px;top:92.40px" width="8.2" height="8.2" viewBox="0 0 8.2 8.2"><rect width="8.2" height="8.2" rx="1.2" fill="#1060c0"/><path d="M1.9 4.2 L3.5 5.8 L6.4 2.6" fill="none" stroke="#fff" stroke-width="0.8"/></svg>
<div class="t k2" style="left:21.4px;top:91.50px;font-size:6.57px;color:#1c1c1c;line-height:10px;">Show pop-up description for folder and desktop items</div>
<svg style="left:10.70px;top:101.60px" width="8.2" height="8.2" viewBox="0 0 8.2 8.2"><rect width="8.2" height="8.2" rx="1.2" fill="#1060c0"/><path d="M1.9 4.2 L3.5 5.8 L6.4 2.6" fill="none" stroke="#fff" stroke-width="0.8"/></svg>
<div class="t k2" style="left:21.4px;top:100.70px;font-size:6.57px;color:#1c1c1c;line-height:10px;">Show preview handlers in preview pane</div>
<svg style="left:10.70px;top:110.80px" width="8.2" height="8.2" viewBox="0 0 8.2 8.2"><rect width="8.2" height="8.2" rx="1.2" fill="#1060c0"/><path d="M1.9 4.2 L3.5 5.8 L6.4 2.6" fill="none" stroke="#fff" stroke-width="0.8"/></svg>
<div class="t k2" style="left:21.4px;top:109.90px;font-size:6.57px;color:#1c1c1c;line-height:10px;">Show status bar</div>
<svg style="left:10.70px;top:120.00px" width="8.2" height="8.2" viewBox="0 0 8.2 8.2"><rect width="8.2" height="8.2" rx="1.2" fill="#1060c0"/><path d="M1.9 4.2 L3.5 5.8 L6.4 2.6" fill="none" stroke="#fff" stroke-width="0.8"/></svg>
<div class="t k2" style="left:21.4px;top:119.10px;font-size:6.57px;color:#1c1c1c;line-height:10px;">Show sync provider notifications</div>
<div class="a" style="left:194.49999999999994px;top:0px;width:10.9px;height:124px;background:#f1f1f1;"></div>
<div class="a" style="left:198.2px;top:32px;width:1.8px;height:39.5px;background:#858585;border-radius:1px"></div>
</div>
<div class="a" style="left:479.9px;top:347px;width:63.7px;height:13.3px;background:#fdfdfd;border:1px solid #e0e0e0;border-radius:2px"></div>
<div class="t " style="left:478.7px;top:348.60px;font-size:6.7px;color:#1c1c1c;line-height:10px;width:66px;text-align:center;">Restore Defaults</div>
<div class="a" style="left:408.7px;top:374.9px;width:45.69999999999999px;height:12px;background:#fdfdfd;border:1px solid #e3e3e3;border-radius:2px"></div>
<div class="t " style="left:409.54999999999995px;top:375.90px;font-size:6.6px;color:#1c1c1c;line-height:10px;width:44px;text-align:center;">OK</div>
<div class="a" style="left:460.2px;top:374.9px;width:44.60000000000002px;height:12px;background:#fdfdfd;border:1px solid #e3e3e3;border-radius:2px"></div>
<div class="t " style="left:460.5px;top:375.90px;font-size:6.6px;color:#1c1c1c;line-height:10px;width:44px;text-align:center;">Cancel</div>
<div class="a" style="left:511px;top:374.9px;width:44.299999999999955px;height:12px;background:#fdfdfd;border:1px solid #e3e3e3;border-radius:2px"></div>
<div class="t " style="left:511.15px;top:375.90px;font-size:6.6px;color:#1c1c1c;line-height:10px;width:44px;text-align:center;">Apply</div>
<svg style="left:480px;top:272px" width="76" height="20" viewBox="480 272 76 20"><path d="M482.5 281.6 L494.3 274.3 L491.8 278.6 L551.3 279.5 Q552.4 280.4 551.3 281.2 L491.8 284.6 L494.3 288.8Z" fill="#e8101a"/></svg>
</body></html>
